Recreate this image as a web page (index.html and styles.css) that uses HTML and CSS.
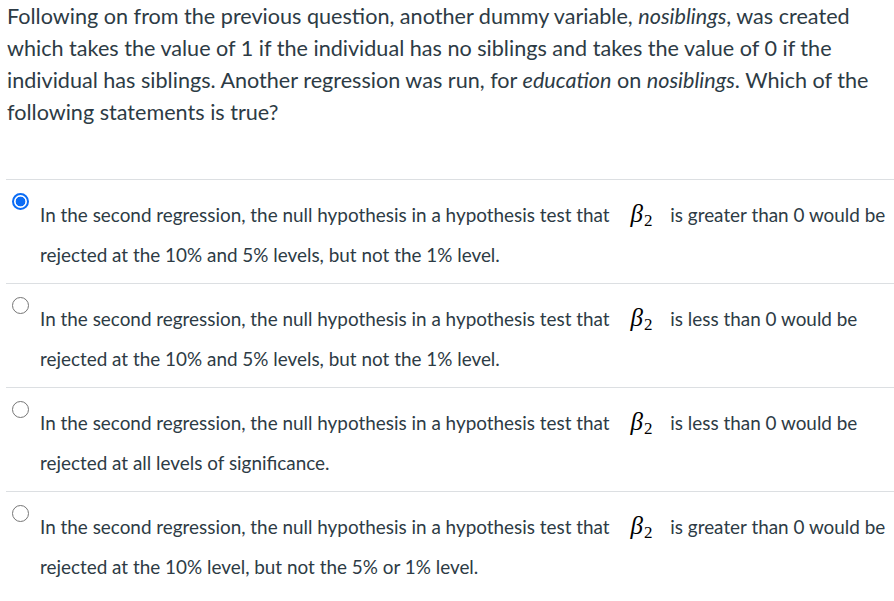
FILE: index.html
```html
<!DOCTYPE html>
<html>
<head>
<meta charset="utf-8">
<link rel="stylesheet" href="styles.css">
</head>
<body>
<div class="question">
  <p>Following on from the previous question, another dummy variable, <em>nosiblings</em>, was created which takes the value of 1 if the individual has no siblings and takes the value of 0 if the individual has siblings. Another regression was run, for <em>education</em> on <em>nosiblings</em>. Which of the following statements is true?</p>
</div>
<div class="answers">
  <div class="answer">
    <span class="radio checked"></span>
    <div class="text">In the second regression, the null hypothesis in a hypothesis test that <span class="math"><i>β</i><sub>2</sub></span> is greater than 0 would be rejected at the 10% and 5% levels, but not the 1% level.</div>
  </div>
  <div class="answer">
    <span class="radio"></span>
    <div class="text">In the second regression, the null hypothesis in a hypothesis test that <span class="math"><i>β</i><sub>2</sub></span> is less than 0 would be rejected at the 10% and 5% levels, but not the 1% level.</div>
  </div>
  <div class="answer">
    <span class="radio"></span>
    <div class="text">In the second regression, the null hypothesis in a hypothesis test that <span class="math"><i>β</i><sub>2</sub></span> is less than 0 would be rejected at all levels of significance.</div>
  </div>
  <div class="answer">
    <span class="radio"></span>
    <div class="text">In the second regression, the null hypothesis in a hypothesis test that <span class="math"><i>β</i><sub>2</sub></span> is greater than 0 would be rejected at the 10% level, but not the 5% or 1% level.</div>
  </div>
</div>
</body>
</html>
```
FILE: styles.css
```css
html, body {
  margin: 0;
  padding: 0;
  background: #fff;
}
body {
  font-family: Lato, "Open Sans", sans-serif;
  color: #2d3b45;
}
.question {
  padding: 0 0 0 7px;
}
.question p {
  margin: 0;
  font-size: 21.6px;
  line-height: 32px;
}
.answers {
  margin-top: 51px;
  margin-left: 6px;
}
.answer {
  display: flex;
  align-items: flex-start;
  border-top: 1px solid #dcdfe2;
  height: 103px;
}
.radio {
  flex: none;
  box-sizing: border-box;
  width: 17px;
  height: 17px;
  border-radius: 50%;
  border: 1px solid #767676;
  margin: 13px 0 0 6px;
  background: #fff;
}
.radio.checked {
  border: 2px solid #0b6cf5;
  background: radial-gradient(circle, #0b6cf5 0 4.5px, #fff 5.2px);
}
.text {
  margin-left: 11px;
  padding-top: 15px;
  font-size: 18.9px;
  line-height: 40px;
}
.math {
  display: inline-block;
  margin: 0 13px 0 16px;
  font-family: "Liberation Serif", "DejaVu Serif", serif;
  font-size: 25px;
  line-height: 20px;
  color: #000;
}
.math i {
  font-style: italic;
}
.math sub {
  font-style: normal;
  font-size: 17px;
  vertical-align: -4px;
  line-height: 16px;
  margin-left: 1px;
}
```
